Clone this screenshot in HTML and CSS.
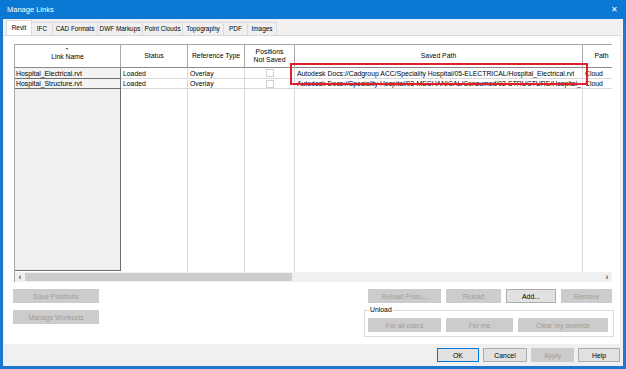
FILE: index.html
```html
<!DOCTYPE html>
<html>
<head>
<meta charset="utf-8">
<title>Manage Links</title>
<link rel="stylesheet" href="styles.css">
</head>
<body>
<div class="window">
  <div class="titlebar">
    <span class="title">Manage Links</span>
    <span class="close">✕</span>
  </div>
  <div class="tabs">
    <div class="tab active">Revit</div>
    <div class="tab t-ifc">IFC</div>
    <div class="tab t-cad">CAD Formats</div>
    <div class="tab t-dwf">DWF Markups</div>
    <div class="tab t-pc">Point Clouds</div>
    <div class="tab t-topo">Topography</div>
    <div class="tab t-pdf">PDF</div>
    <div class="tab t-img">Images</div>
  </div>
  <div class="panel">
    <div class="grid-wrap">
      <div class="grid">
        <div class="hcell first"><span class="sort"></span>Link Name</div>
        <div class="hcell">Status</div>
        <div class="hcell">Reference Type</div>
        <div class="hcell">Positions<br>Not Saved</div>
        <div class="hcell">Saved Path</div>
        <div class="hcell last">Path</div>

        <div class="cell first">Hospital_Electrical.rvt</div>
        <div class="cell">Loaded</div>
        <div class="cell">Overlay</div>
        <div class="cell center"><span class="check"></span></div>
        <div class="cell"><span class="clip">Autodesk Docs://Cadgroup ACC/Speciality Hospital/05-ELECTRICAL/Hospital_Electrical.rvt</span></div>
        <div class="cell last">Cloud</div>

        <div class="cell first">Hospital_Structure.rvt</div>
        <div class="cell">Loaded</div>
        <div class="cell">Overlay</div>
        <div class="cell center"><span class="check"></span></div>
        <div class="cell"><span class="clip">Autodesk Docs://Speciality Hospital/03-MECHANICAL/Consumed/02-STRUCTURE/Hospital_</span></div>
        <div class="cell last">Cloud</div>

        <div class="fill first"></div>
        <div class="fill"></div>
        <div class="fill"></div>
        <div class="fill"></div>
        <div class="fill"></div>
        <div class="fill last"></div>
      </div>
      <div class="hscroll">
        <span class="arrow">‹</span>
        <div class="track"><div class="thumb"></div></div>
        <span class="arrow">›</span>
      </div>
      <div class="highlight"></div>
    </div>
    <div class="actions">
      <div class="left-actions">
        <div class="btn disabled w86">Save Positions</div>
        <div class="btn disabled w86">Manage Worksets</div>
      </div>
      <div class="right-actions">
        <div class="btn-row">
          <div class="btn disabled w73">Reload From...</div>
          <div class="btn disabled w55">Reload</div>
          <div class="btn w50">Add...</div>
          <div class="btn disabled w51">Remove</div>
        </div>
        <div class="group">
          <span class="legend">Unload</span>
          <div class="btn-row">
            <div class="btn disabled w73">For all users</div>
            <div class="btn disabled w67">For me</div>
            <div class="btn disabled w90">Clear my override</div>
          </div>
        </div>
      </div>
    </div>
  </div>
  <div class="footer">
    <div class="btn default w42">OK</div>
    <div class="btn w44">Cancel</div>
    <div class="btn disabled w43">Apply</div>
    <div class="btn w42">Help</div>
  </div>
</div>
</body>
</html>
```

FILE: styles.css
```css
* { box-sizing: border-box; }
html, body { margin: 0; padding: 0; }
body {
  font-family: "Liberation Sans", Arial, sans-serif;
  font-size: 6.85px;
  color: #000;
  background: #fff;
}
.window {
  width: 626px;
  height: 369px;
  background: #f0f0f0;
  border-left: 3px solid #1a78d0;
  border-right: 3px solid #1a78d0;
  border-bottom: 3px solid #1a78d0;
  display: flex;
  flex-direction: column;
}
.titlebar {
  height: 19px;
  flex: none;
  background: #0b78d3;
  color: #fff;
  display: flex;
  align-items: center;
  justify-content: space-between;
  margin: 0 -3px;
  padding-left: 7px;
  padding-right: 8px;
}
.title { font-size: 7.5px; }
.close { font-size: 8px; }
.tabs {
  height: 16px;
  flex: none;
  display: flex;
  align-items: flex-end;
  padding-left: 3px;
  font-size: 6.4px;
}
.tab {
  height: 13px;
  line-height: 12px;
  padding: 0;
  text-align: center;
  border: 1px solid #dadada;
  border-bottom: none;
  margin-left: -1px;
  background: #f0f0f0;
  white-space: nowrap;
}
.tab.active {
  height: 15px;
  line-height: 13px;
  background: #fff;
  width: 26px;
  margin-left: 0;
  position: relative;
  z-index: 1;
}
.t-ifc { width: 22px; }
.t-cad { width: 46px; }
.t-dwf { width: 46px; }
.t-pc { width: 41px; }
.t-topo { width: 42px; }
.t-pdf { width: 25px; }
.t-img { width: 30px; }
.panel {
  flex: 1;
  background: #fff;
  margin: 0 3px 0 1px;
  padding: 8px 8px 0 10px;
  display: flex;
  flex-direction: column;
  border-top: 1px solid #dadada;
}
.grid-wrap {
  position: relative;
  width: 598px;
  height: 238px;
  display: flex;
  flex-direction: column;
  border-left: 1px solid #a8a8a8;
  border-top: 1px solid #a8a8a8;
}
.grid {
  flex: 1;
  display: grid;
  grid-template-columns: 106px 67px 57px 50px 288px 29px;
  grid-template-rows: 23px 11px 10px 1fr;
  overflow: hidden;
}
.hcell {
  border-right: 1px solid #a8a8a8;
  border-bottom: 1px solid #8a8a8a;
  display: flex;
  flex-direction: column;
  align-items: center;
  justify-content: center;
  text-align: center;
  line-height: 8px;
  position: relative;
  background: #fff;
}
.hcell.last { border-right: none; padding-left: 8px; }
.sort {
  position: absolute;
  top: 3px;
  left: 51px;
  width: 0;
  height: 0;
  border-left: 1.5px solid transparent;
  border-right: 1.5px solid transparent;
  border-top: 2px solid #333;
}
.hcell.first { padding-top: 2px; }
.cell {
  border-right: 1px solid #d9d9d9;
  border-bottom: 1px solid #d9d9d9;
  padding-left: 2px;
  white-space: nowrap;
  overflow: hidden;
  min-width: 0;
  line-height: 9px;
  display: flex;
  align-items: center;
}
.clip {
  display: block;
  overflow: hidden;
  max-width: 100%;
}
.cell.first {
  background: #f3f3f3;
  border: 1px solid #6e6e6e;
  border-top: none;
  border-left: none;
  padding-left: 1px;
}
.cell.last { border-right: none; }
.cell.center { justify-content: center; padding-left: 0; }
.check {
  width: 8px;
  height: 8px;
  border: 1px solid #d0d0d0;
  background: #fff;
}
.fill { border-right: 1px solid #d9d9d9; }
.fill.first {
  background: #f0f0f0;
  border-right: 1px solid #6e6e6e;
  border-bottom: 1px solid #6e6e6e;
  margin-bottom: 1px;
}
.fill.last { border-right: none; }
.hscroll {
  height: 10px;
  flex: none;
  display: flex;
  align-items: center;
  background: #f0f0f0;
}
.arrow {
  width: 10px;
  text-align: center;
  font-size: 9px;
  line-height: 9px;
  font-weight: bold;
  color: #555;
}
.track {
  flex: 1;
  height: 8px;
}
.thumb {
  width: 267px;
  height: 8px;
  background: #cdcdcd;
}
.highlight {
  position: absolute;
  left: 275px;
  top: 18px;
  width: 298px;
  height: 22px;
  border: 2px solid #e0212b;
}
.actions {
  display: flex;
  justify-content: space-between;
  margin-top: 7px;
}
.left-actions {
  display: flex;
  flex-direction: column;
  gap: 7px;
  margin-left: -1px;
}
.right-actions {
  width: 250px;
  display: flex;
  flex-direction: column;
  align-items: stretch;
  margin-right: -2px;
}
.btn-row {
  display: flex;
  gap: 5px;
  padding-left: 4px;
}
.btn {
  height: 14px;
  display: flex;
  align-items: center;
  justify-content: center;
  background: #e1e1e1;
  border: 1px solid #adadad;
  white-space: nowrap;
  color: #000;
}
.btn.disabled {
  background: #cccccc;
  border-color: #cccccc;
  color: #9c9c9c;
}
.btn.default { border-color: #0078d7; }
.w86 { width: 86px; }
.w73 { width: 73px; }
.w55 { width: 55px; }
.w50 { width: 50px; }
.w51 { width: 51px; }
.w67 { width: 67px; }
.w90 { width: 90px; }
.w42 { width: 42px; }
.w43 { width: 43px; }
.w44 { width: 44px; }
.group {
  position: relative;
  margin-top: 7px;
  border: 1px solid #dcdcdc;
  height: 27px;
  padding-top: 7px;
}
.group .btn-row { padding-left: 3px; }
.legend {
  position: absolute;
  top: -5px;
  left: 4px;
  background: #fff;
  padding: 0 1px;
  line-height: 8px;
}
.footer {
  height: 22px;
  flex: none;
  display: flex;
  justify-content: flex-end;
  align-items: center;
  gap: 4px;
  padding-right: 3px;
}
```
